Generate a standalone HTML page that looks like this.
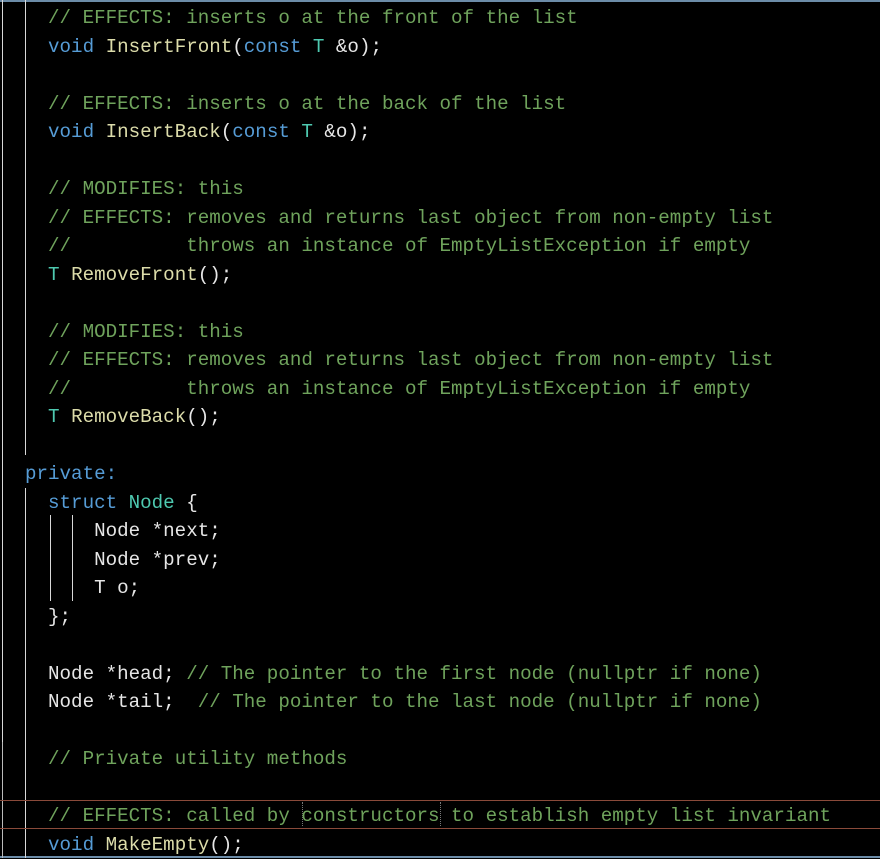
<!DOCTYPE html>
<html><head><meta charset="utf-8"><style>
body{margin:0;background:#000;width:880px;height:858px;overflow:hidden;position:relative;font-family:"Liberation Mono",monospace;font-size:19.2px;}
pre{margin:0;position:absolute;left:25px;top:4px;line-height:28.5px;color:#e6e6e6;font-family:inherit;}
.c{color:#6fa35c}.k{color:#569cd6}.t{color:#4ec9b0}.f{color:#dcdcaa}
.v{position:absolute;background:#d8d8d8;width:1px}
.h{position:absolute;left:0;width:880px;height:1px;background:#8a4a3a}
</style></head><body>
<div style="position:absolute;left:0;top:0;width:880px;height:2px;background:#6c8ca8"></div>
<div style="position:absolute;left:0;bottom:0;width:880px;height:2px;background:#6c8ca8"></div>
<div class="v" style="left:2px;top:0;height:742px"></div>
<div class="v" style="left:2px;top:742px;height:116px;background:#bbb"></div>
<div class="v" style="left:25px;top:0;height:455px"></div>
<div class="v" style="left:25px;top:488px;height:370px"></div>
<div class="v" style="left:50px;top:515px;height:86px"></div>
<div class="v" style="left:72px;top:515px;height:86px"></div>
<div class="h" style="top:800px"></div>
<div class="h" style="top:828px"></div>
<div style="position:absolute;left:302px;top:802px;width:137px;height:24px;border-left:1px dotted #777;border-right:1px dotted #777"></div>
<pre>  <span class="c">// EFFECTS: inserts o at the front of the list</span>
  <span class="k">void</span> <span class="f">InsertFront</span>(<span class="k">const</span> <span class="t">T</span> &amp;o);

  <span class="c">// EFFECTS: inserts o at the back of the list</span>
  <span class="k">void</span> <span class="f">InsertBack</span>(<span class="k">const</span> <span class="t">T</span> &amp;o);

  <span class="c">// MODIFIES: this</span>
  <span class="c">// EFFECTS: removes and returns last object from non-empty list</span>
  <span class="c">//          throws an instance of EmptyListException if empty</span>
  <span class="t">T</span> <span class="f">RemoveFront</span>();

  <span class="c">// MODIFIES: this</span>
  <span class="c">// EFFECTS: removes and returns last object from non-empty list</span>
  <span class="c">//          throws an instance of EmptyListException if empty</span>
  <span class="t">T</span> <span class="f">RemoveBack</span>();

<span class="k">private:</span>
  <span class="k">struct</span> <span class="t">Node</span> {
      Node *next;
      Node *prev;
      T o;
  };

  Node *head; <span class="c">// The pointer to the first node (nullptr if none)</span>
  Node *tail;  <span class="c">// The pointer to the last node (nullptr if none)</span>

  <span class="c">// Private utility methods</span>

  <span class="c">// EFFECTS: called by constructors to establish empty list invariant</span>
  <span class="k">void</span> <span class="f">MakeEmpty</span>();
</pre>
</body></html>
